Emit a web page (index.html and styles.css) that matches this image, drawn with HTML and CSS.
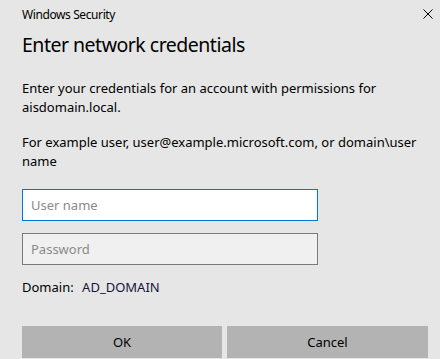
FILE: index.html
```html
<!DOCTYPE html>
<html lang="en">
<head>
    <meta charset="UTF-8">
    <title>Windows Security</title>
    <link rel="stylesheet" href="styles.css">
</head>
<body>
<div class="dialog">
    <div class="dialog-titlebar">
        <div class="dialog-caption">Windows Security</div>
        <div class="dialog-close">
            <svg width="10" height="10" viewBox="0 0 10 10">
                <path d="M0.5 0.5 L9.5 9.5 M9.5 0.5 L0.5 9.5" stroke="#000" stroke-width="1" fill="none"/>
            </svg>
        </div>
    </div>

    <h1 class="dialog-heading">Enter network credentials</h1>

    <p class="dialog-text">Enter your credentials for an account with permissions for aisdomain.local.</p>
    <p class="dialog-text">For example user, user@example.microsoft.com, or domain\user name</p>

    <div class="dialog-fields">
        <input type="text" class="field field-focus" placeholder="User name" />
        <input type="password" class="field" placeholder="Password" />
    </div>

    <div class="dialog-domain">
        <span class="domain-label">Domain:</span>
        <span class="domain-value">AD_DOMAIN</span>
    </div>

    <div class="dialog-buttons">
        <button class="btn">OK</button>
        <button class="btn">Cancel</button>
    </div>
</div>
</body>
</html>
```

FILE: styles.css
```css
body {
    margin: 0;
    background-color: #e6e6e6;
    font-family: "Noto Sans", "Open Sans", sans-serif;
    color: #000;
}
.dialog {
    width: 440px;
    height: 359px;
    overflow: hidden;
    padding: 0 12px 0 22px;
    box-sizing: border-box;
}
.dialog-titlebar {
    display: flex;
    justify-content: space-between;
    align-items: center;
    height: 28px;
}
.dialog-caption {
    font-size: 12px;
    letter-spacing: -0.4px;
}
.dialog-close {
    display: flex;
    margin-right: -5px;
}
.dialog-heading {
    margin: 2px 0 0 0;
    font-size: 19.5px;
    font-weight: normal;
    letter-spacing: -0.5px;
    line-height: 30px;
}
.dialog-text {
    margin: 19px 0 0 0;
    font-size: 13px;
    line-height: 19px;
    margin-right: -8px;
}
.dialog-text + .dialog-text {
    margin-top: 16px;
}
.dialog-fields {
    display: flex;
    flex-direction: column;
    gap: 12px;
    margin-top: 18px;
}
.field {
    width: 296px;
    height: 32px;
    box-sizing: border-box;
    border: 1px solid #7a7a7a;
    background-color: #f0f0f0;
    padding: 0 8px;
    font-family: inherit;
    font-size: 13px;
    outline: none;
}
.field::placeholder {
    color: #8a8a8a;
}
.field-focus {
    border-color: #0078d7;
    background-color: #fff;
}
.dialog-domain {
    margin-top: 13px;
    font-size: 13px;
    line-height: 19px;
}
.domain-value {
    margin-left: 5px;
    color: #14143c;
}
.dialog-buttons {
    display: flex;
    gap: 5px;
    margin-top: 29px;
}
.btn {
    width: 200px;
    height: 32px;
    border: 0;
    background-color: #b3b3b3;
    font-family: inherit;
    font-size: 13px;
    color: #000;
    padding: 0;
}
.btn + .btn {
    width: 201px;
}
```
